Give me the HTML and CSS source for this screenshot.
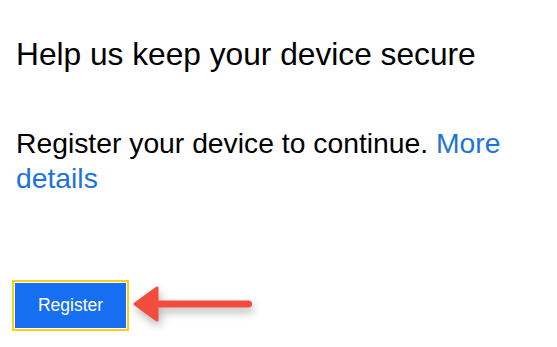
FILE: index.html
```html
<!DOCTYPE html>
<html>
<head>
<meta charset="utf-8">
<link rel="stylesheet" href="styles.css">
</head>
<body>
<main class="page">
  <h1 class="title">Help us keep your device secure</h1>
  <p class="message">Register your device to continue. <a class="link" href="#">More details</a></p>
  <div class="actions">
    <button class="register">Register</button>
    <svg class="arrow" width="130" height="48" viewBox="0 0 130 48" xmlns="http://www.w3.org/2000/svg">
      <polygon points="4,22 26,6 26,38" fill="#f44c3b" stroke="#f44c3b" stroke-width="3" stroke-linejoin="round"/>
      <rect x="24" y="18.5" width="97" height="7" rx="3.5" fill="#f44c3b"/>
    </svg>
  </div>
</main>
</body>
</html>
```
FILE: styles.css
```css
html, body {
  margin: 0;
  padding: 0;
  background: #ffffff;
}
.page {
  display: flex;
  flex-direction: column;
  align-items: flex-start;
  padding: 34px 0 0 16px;
  font-family: "Liberation Sans", Arial, Helvetica, sans-serif;
  color: #000;
}
.title {
  margin: 0;
  font-size: 31.7px;
  line-height: 40px;
  font-weight: normal;
}
.message {
  margin: 52px 0 0 0;
  font-size: 28.3px;
  line-height: 35px;
  width: 510px;
}
.link {
  color: #1c74d9;
  text-decoration: none;
}
.actions {
  margin-top: 84px;
  margin-left: -4px;
  display: flex;
  align-items: center;
  gap: 2px;
}
.register {
  box-sizing: border-box;
  width: 117px;
  height: 51px;
  border: 2px solid #f7d117;
  outline: none;
  box-shadow: inset 0 0 0 1px #ffffff;
  background: #166ff3;
  color: #ffffff;
  font-family: "Liberation Sans", Arial, Helvetica, sans-serif;
  font-size: 17.5px;
  padding: 0;
  margin: 0;
}
.arrow {
  display: block;
  filter: drop-shadow(2px 5px 4px rgba(0, 0, 0, 0.28));
}
```
